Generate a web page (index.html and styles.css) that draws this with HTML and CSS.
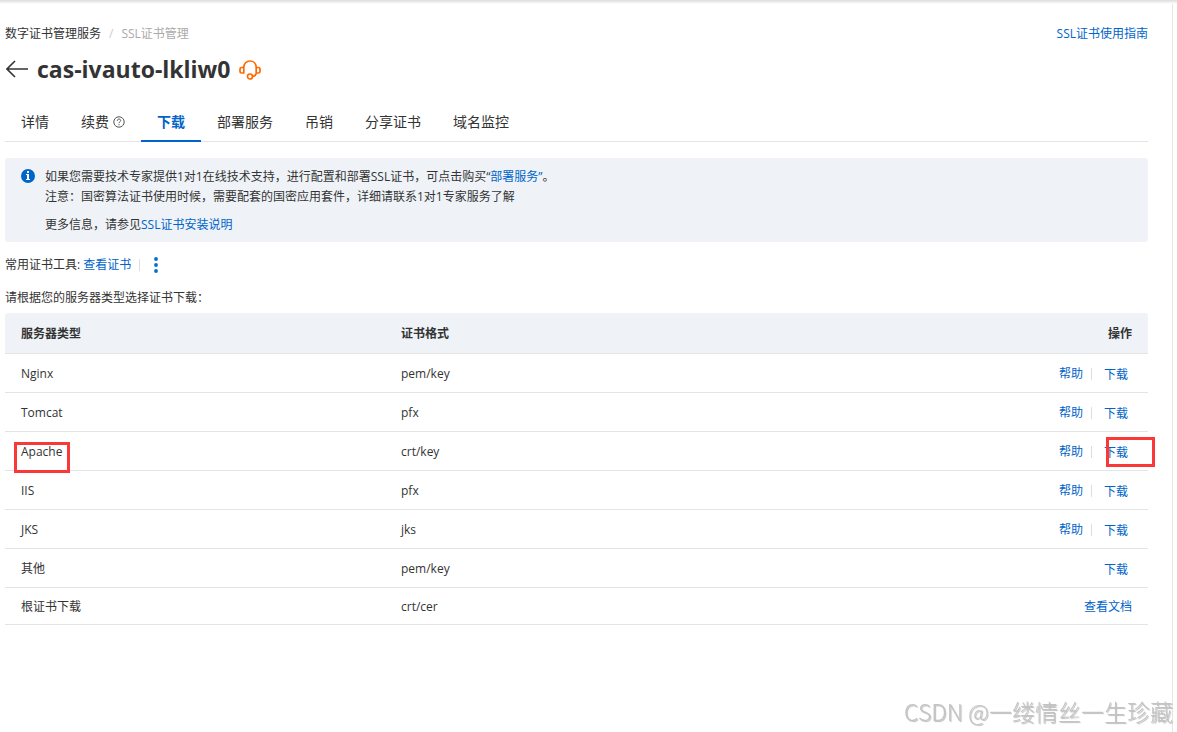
FILE: index.html
```html
<!DOCTYPE html>
<html lang="zh-CN">
  <head>
    <meta charset="UTF-8" />
    <meta name="viewport" content="width=device-width, initial-scale=1.0" />
    <title>SSL证书管理</title>
    <link rel="stylesheet" href="styles.css">
  </head>
  <body>
    <main class="page">
      <div class="topbar">
        <nav class="breadcrumb">
          <a href="#">数字证书管理服务</a>
          <span class="slash">/</span>
          <span class="current">SSL证书管理</span>
        </nav>
        <a class="link" href="#">SSL证书使用指南</a>
      </div>

      <header class="title">
        <a class="back" href="#" aria-label="返回">
          <svg width="22" height="18" viewBox="0 0 22 18" fill="none" stroke="#333" stroke-width="1.6">
            <path d="M22 9H1.5M9 1L1 9l8 8" />
          </svg>
        </a>
        <h1>cas-ivauto-lkliw0</h1>
        <svg class="support" width="22" height="20" viewBox="0 0 22 20" fill="none" stroke="#ff6a00" stroke-width="1.7" stroke-linejoin="round">
          <path d="M4.8 13.5v-6C4.8 3.5 7.5 1 11 1s6.2 2.5 6.2 6.5v6c-.3 1.6-1.5 2.7-3.7 3" />
          <path d="M4.8 7.5H2.500C1.500 7.500 1 8 1 9v2.500c0 1 .5 1.500 1.500 1.500h2.300" />
          <path d="M17.2 7.5h2.300c1 0 1.500.5 1.500 1.500v2.500c0 1-.5 1.500-1.500 1.500h-2.300" />
          <circle cx="11" cy="16.5" r="2.5" />
        </svg>
      </header>

      <nav class="tabs">
        <a href="#">详情</a>
        <a href="#">续费
          <svg width="12" height="12" viewBox="0 0 12 12" fill="none" stroke="#555">
            <circle cx="6" cy="6" r="5.2" />
            <path d="M4.3 4.9C4.3 3.7 5 3.1 6 3.1s1.7.6 1.7 1.5C7.7 5.7 6 5.8 6 7.200M6 8.200v1.100" />
          </svg>
        </a>
        <a class="active" href="#">下载</a>
        <a href="#">部署服务</a>
        <a href="#">吊销</a>
        <a href="#">分享证书</a>
        <a href="#">域名监控</a>
      </nav>

      <section class="notice">
        <svg width="14" height="14" viewBox="0 0 14 14">
          <circle cx="7" cy="7" r="7" fill="#0064c8" />
          <path d="M6 2h2v2H6zM5 5h3v5h1v1H5v-1h1V6H5z" fill="#fff" />
        </svg>
        <div>
          <p>如果您需要技术专家提供1对1在线技术支持，进行配置和部署SSL证书，可点击购买“<a class="link" href="#">部署服务”</a>。</p>
          <p>注意：国密算法证书使用时候，需要配套的国密应用套件，详细请联系1对1专家服务了解</p>
          <p class="more">更多信息，请参见<a class="link" href="#">SSL证书安装说明</a></p>
        </div>
      </section>

      <div class="tools">
        <span>常用证书工具:</span>
        <a class="link" href="#">查看证书</a>
        <span class="divider"></span>
        <button class="dots" type="button" aria-label="更多">
          <svg width="4" height="16" viewBox="0 0 4 16" fill="#0070cc">
            <circle cx="2" cy="2" r="1.9" />
            <circle cx="2" cy="8" r="1.9" />
            <circle cx="2" cy="14" r="1.9" />
          </svg>
        </button>
      </div>

      <p class="hint">请根据您的服务器类型选择证书下载：</p>

      <table class="certs">
        <thead>
          <tr><th class="type">服务器类型</th><th>证书格式</th><th class="ops">操作</th></tr>
        </thead>
        <tbody>
          <tr>
            <td>Nginx</td>
            <td>pem/key</td>
            <td><div class="actions"><a class="link" href="#">帮助</a><span class="divider"></span><button type="button">下载</button></div></td>
          </tr>
          <tr>
            <td>Tomcat</td>
            <td>pfx</td>
            <td><div class="actions"><a class="link" href="#">帮助</a><span class="divider"></span><button type="button">下载</button></div></td>
          </tr>
          <tr>
            <td>Apache<span class="mark mark-name"></span></td>
            <td>crt/key</td>
            <td><div class="actions"><a class="link" href="#">帮助</a><span class="divider"></span><button type="button">下载</button></div><span class="mark mark-download"></span></td>
          </tr>
          <tr>
            <td>IIS</td>
            <td>pfx</td>
            <td><div class="actions"><a class="link" href="#">帮助</a><span class="divider"></span><button type="button">下载</button></div></td>
          </tr>
          <tr>
            <td>JKS</td>
            <td>jks</td>
            <td><div class="actions"><a class="link" href="#">帮助</a><span class="divider"></span><button type="button">下载</button></div></td>
          </tr>
          <tr>
            <td>其他</td>
            <td>pem/key</td>
            <td><div class="actions"><button type="button">下载</button></div></td>
          </tr>
          <tr class="root">
            <td>根证书下载</td>
            <td>crt/cer</td>
            <td><div class="actions"><a class="link" href="#">查看文档</a></div></td>
          </tr>
        </tbody>
      </table>
    </main>
    <div class="watermark">CSDN @一缕情丝一生珍藏</div>
  </body>
</html>
```

FILE: styles.css
```css
* {
  box-sizing: border-box;
}
body {
  margin: 0;
  background: #fff;
  color: #333;
  font: 12px/20px "Open Sans", "Noto Sans CJK SC", sans-serif;
}
h1,
p {
  margin: 0;
}
a {
  color: inherit;
  text-decoration: none;
}
.link {
  color: #0064c8;
}
.page {
  min-height: 100vh;
  margin-right: 4px;
  padding: 24px 24px 0 5px;
  border-right: 1px solid #e5e5e5;
}
/* shadow of the console header above the page */
body::before {
  content: "";
  position: absolute;
  top: 0;
  left: 0;
  right: 0;
  height: 4px;
  background: linear-gradient(#dcdcdc, #fff);
}

.topbar {
  display: flex;
  justify-content: space-between;
}
.breadcrumb {
  display: flex;
  gap: 8px;
}
.slash {
  color: #ccc;
}
.current {
  color: #aaa;
}

.title {
  display: flex;
  align-items: center;
  gap: 9px;
  height: 28px;
  margin-top: 11px;
  padding-left: 1px;
}
.back {
  display: block;
  height: 18px;
}
.support {
  margin-top: 2px;
}
h1 {
  font-size: 23px;
  line-height: 28px;
}

.tabs {
  display: flex;
  height: 40px;
  margin-top: 19px;
  border-bottom: 1px solid #e3e4e6;
  font-size: 14px;
}
.tabs a {
  display: flex;
  align-items: center;
  gap: 4px;
  height: 40px;
  padding: 0 16px;
}
.tabs .active {
  border-bottom: 2px solid #0064c8;
  padding-top: 2px;
  color: #0064c8;
  font-weight: bold;
}

.notice {
  display: flex;
  gap: 10px;
  margin-top: 16px;
  padding: 9px 16px 7px;
  border-radius: 3px;
  background: #eff3f8;
}
.notice svg {
  flex: none;
  margin-top: 2px;
}
.more {
  margin-top: 8px;
}

.tools {
  display: flex;
  align-items: center;
  height: 20px;
  margin-top: 13px;
}
.tools .link {
  margin-left: 3px;
}
.divider {
  width: 1px;
  height: 12px;
  margin: 0 12px 0 8px;
  background: #ddd;
}
.tools .divider {
  margin-right: 14px;
}
button {
  padding: 0;
  border: 0;
  background: none;
  color: #0064c8;
  font: inherit;
  cursor: pointer;
}
.dots {
  display: flex;
}
.hint {
  margin-top: 13px;
}

.certs {
  width: 100%;
  margin-top: 5px;
  border-collapse: separate;
  border-spacing: 0;
  table-layout: fixed;
}
.certs th,
.certs td {
  position: relative;
  height: 39px;
  padding: 2px 16px 0;
  border-bottom: 1px solid #e3e4e6;
  text-align: left;
}
.certs th {
  height: 41px;
  background: #eff3f8;
}
.certs .type {
  width: 380px;
  border-top-left-radius: 3px;
}
.certs .ops {
  width: 240px;
  border-top-right-radius: 3px;
  text-align: right;
}
.certs .root td {
  height: 37px;
}
.actions {
  display: flex;
  align-items: center;
  justify-content: flex-end;
}
.actions button {
  margin-right: 4px;
  padding-top: 2px;
}

/* red frames around the Apache row entries */
.mark {
  position: absolute;
  border: 3px solid #fb3838;
}
.mark-name {
  top: 10px;
  left: 9px;
  width: 56px;
  height: 31px;
  z-index: 1;
}
.mark-download {
  top: 5px;
  right: -7px;
  width: 49px;
  height: 30px;
}

.watermark {
  position: fixed;
  right: 4px;
  bottom: 5px;
  color: #c4c4c4;
  font: 300 23px/32px "Noto Sans CJK SC", sans-serif;
  text-shadow: 1px 1px 1px #bbb;
}
```
